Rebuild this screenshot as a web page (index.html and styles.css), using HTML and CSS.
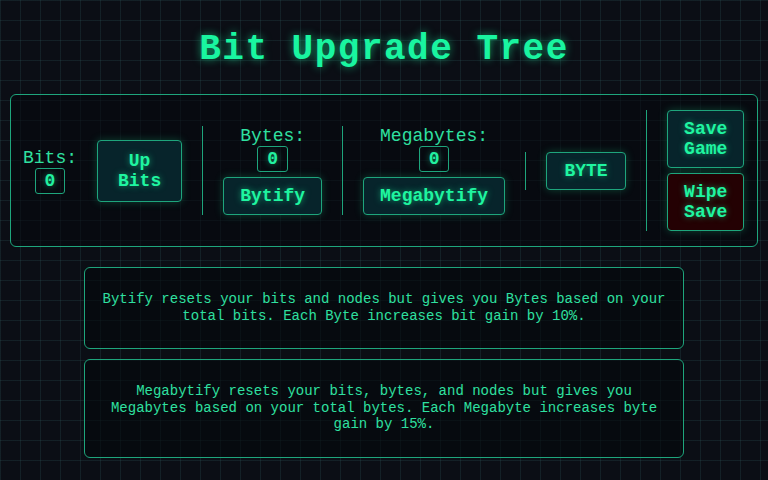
FILE: index.html
```html
<!DOCTYPE html>
<html lang="en">

<head>
    <meta charset="UTF-8">
    <meta name="viewport" content="width=device-width, initial-scale=1.0">
    <title>Bit Upgrade Tree</title>
    <link rel="stylesheet" href="styles.css">
</head>

<body>
    <h1 class="title">Bit Upgrade Tree</h1>

    <div class="topBar">
        <div class="stat">
            <span class="statLabel">Bits:</span>
            <span class="statValue" id="bits">0</span>
        </div>
        <button class="btn wrapBtn" id="upBits">Up Bits</button>

        <div class="section stat">
            <span class="statLabel">Bytes:</span>
            <span class="statValue" id="bytes">0</span>
            <button class="btn" id="bytify">Bytify</button>
        </div>

        <div class="section stat">
            <span class="statLabel">Megabytes:</span>
            <span class="statValue" id="megabytes">0</span>
            <button class="btn" id="megabytify">Megabytify</button>
        </div>

        <div class="section">
            <button class="btn" id="byteNode">BYTE</button>
        </div>

        <div class="section saveCol">
            <button class="btn saveBtn" id="saveGame">Save Game</button>
            <button class="btn saveBtn wipeBtn" id="wipeSave">Wipe Save</button>
        </div>
    </div>

    <div class="infoBox">
        Bytify resets your bits and nodes but gives you Bytes based on your total bits. Each Byte increases bit gain by 10%.
    </div>
    <div class="infoBox">
        Megabytify resets your bits, bytes, and nodes but gives you Megabytes based on your total bytes. Each Megabyte increases byte gain by 15%.
    </div>
</body>

</html>
```

FILE: styles.css
```css
* {
    box-sizing: border-box;
    font-family: 'Liberation Mono', 'Courier New', monospace;
}

body {
    margin: 0px;
    padding: 10px;
    min-height: 100vh;
    color: #2fe6a2;
    background-color: #0b0e15;
    background-image:
        linear-gradient(rgba(60, 120, 120, 0.18) 1px, transparent 1px),
        linear-gradient(90deg, rgba(60, 120, 120, 0.18) 1px, transparent 1px);
    background-size: 20px 20px;
    background-position: 0px 0px;
}

.title {
    margin: 19px 0px 24px;
    text-align: center;
    font-size: 36px;
    letter-spacing: 1.5px;
    color: #19f5a0;
    text-shadow: 0 0 8px rgba(25, 245, 160, 0.6);
}

/* top control bar */
.topBar {
    display: flex;
    align-items: center;
    gap: 20px;
    padding: 15px 12px;
    border: 1px solid #1ea57c;
    border-radius: 6px;
    background-color: rgba(5, 8, 12, 0.55);
}

.section {
    border-left: 1px solid #1ea57c;
    padding-left: 20px;
}

.stat {
    display: flex;
    flex-direction: column;
    align-items: center;
}

.statLabel {
    font-size: 18px;
    color: #2fe0a0;
}

.statValue {
    font-size: 18px;
    font-weight: bold;
    padding: 2px 9px;
    border: 1px solid #1ea57c;
    border-radius: 3px;
    color: #22f0a0;
    text-shadow: 0 0 6px rgba(25, 245, 160, 0.5);
}

.btn {
    font-size: 18px;
    font-weight: bold;
    padding: 8px 16px;
    color: #1ff5a0;
    background-color: #07242b;
    border: 1px solid #1ea57c;
    border-radius: 4px;
    box-shadow: 0 0 8px rgba(30, 230, 150, 0.25);
    text-shadow: 0 0 6px rgba(25, 245, 160, 0.55);
    cursor: pointer;
}

.stat .btn {
    margin-top: 5px;
}

.wrapBtn {
    width: min-content;
    padding: 10px 20px;
}

#byteNode {
    min-width: 80px;
}

.saveCol {
    display: flex;
    flex-direction: column;
    gap: 5px;
}

.saveBtn {
    width: min-content;
}

.wipeBtn {
    background-color: #240103;
}

/* explanation boxes */
.infoBox {
    width: 600px;
    margin: 20px auto 0px;
    padding: 23px 15px 24px;
    border: 1px solid #1ea57c;
    border-radius: 6px;
    background-color: rgba(3, 8, 12, 0.6);
    text-align: center;
    font-size: 14px;
    line-height: 16.5px;
    color: #2fe0a0;
}

.infoBox + .infoBox {
    margin-top: 10px;
}
```
